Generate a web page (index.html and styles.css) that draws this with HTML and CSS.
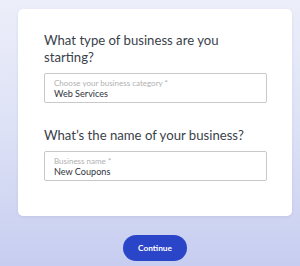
FILE: index.html
```html
<!DOCTYPE html>
<html lang="en">
<head>
    <meta charset="UTF-8">
    <meta name="viewport" content="width=device-width, initial-scale=1.0">
    <title>Business setup</title>
    <link rel="stylesheet" href="styles.css">
</head>
<body>

    <div class="card">
        <div class="question">
            <h2 class="question-title">What type of business are you starting?</h2>
            <div class="field">
                <div class="field-label">Choose your business category *</div>
                <div class="field-value">Web Services</div>
            </div>
        </div>

        <div class="question second">
            <h2 class="question-title">What’s the name of your business?</h2>
            <div class="field">
                <div class="field-label">Business name *</div>
                <div class="field-value">New Coupons</div>
            </div>
        </div>
    </div>

    <div class="actions">
        <button class="continue-btn">Continue</button>
    </div>

</body>
</html>
```

FILE: styles.css
```css
body {
    margin: 0;
    height: 266px;
    overflow: hidden;
    font-family: Lato, "Open Sans", sans-serif;
    background: linear-gradient(180deg, #eceef9 0%, #dde1f6 50%, #c7cdf0 100%);
}

.card {
    width: 274px;
    box-sizing: border-box;
    margin: 9px 0 0 18px;
    padding: 23px 25px 35px 26px;
    background-color: #fff;
    border-radius: 5px;
    box-shadow: 0 1px 3px rgba(90, 100, 160, 0.12);
}

.question-title {
    margin: 0 0 7px;
    font-size: 13.15px;
    line-height: 17px;
    font-weight: 400;
    color: #3b3f4a;
}

.second {
    margin-top: 24px;
}

.field {
    height: 30px;
    box-sizing: border-box;
    padding: 5px 9px 0;
    border: 1px solid #c9c9c9;
    border-radius: 2px;
}

.field-label {
    font-size: 8px;
    line-height: 9px;
    color: #b0b0b0;
}

.field-value {
    font-size: 9.1px;
    line-height: 11px;
    color: #2f333b;
}

.actions {
    display: flex;
    justify-content: center;
    margin: 19px 0 0 18px;
    width: 274px;
}

.continue-btn {
    width: 64px;
    height: 26px;
    border: none;
    border-radius: 13px;
    background-color: #2b45c9;
    color: #fff;
    font-family: Lato, sans-serif;
    font-size: 8.3px;
    font-weight: 700;
    letter-spacing: 0;
}
```
